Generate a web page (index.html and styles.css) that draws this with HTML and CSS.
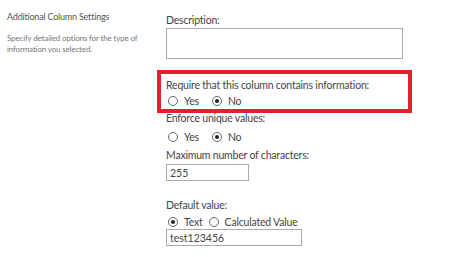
FILE: index.html
```html
<!DOCTYPE html>
<html lang="en">
<head>
    <meta charset="UTF-8">
    <title>Additional Column Settings</title>
    <link rel="stylesheet" href="styles.css">
</head>
<body>
    <div class="settings">
        <div class="section-info">
            <div class="section-title">Additional Column Settings</div>
            <div class="section-desc">Specify detailed options for the type of<br>information you selected.</div>
        </div>
        <div class="fields">
            <div class="field field-desc">
                <label for="description">Description:</label>
                <textarea id="description" class="desc-box"></textarea>
            </div>
            <div class="field field-required">
                <div class="field-label">Require that this column contains information:</div>
                <div class="choices">
                    <label class="choice"><input type="radio" name="required"> Yes</label>
                    <label class="choice"><input type="radio" name="required" checked> No</label>
                </div>
                <!-- highlight box drawn over the field -->
                <div class="highlight"></div>
            </div>
            <div class="field field-unique">
                <div class="field-label">Enforce unique values:</div>
                <div class="choices">
                    <label class="choice"><input type="radio" name="unique"> Yes</label>
                    <label class="choice"><input type="radio" name="unique" checked> No</label>
                </div>
            </div>
            <div class="field field-max">
                <label for="maxChars">Maximum number of characters:</label>
                <input type="text" id="maxChars" class="text-input short" value="255">
            </div>
            <div class="field field-default">
                <div class="field-label">Default value:</div>
                <div class="choices tight">
                    <label class="choice"><input type="radio" name="defType" checked> Text</label>
                    <label class="choice"><input type="radio" name="defType"> Calculated Value</label>
                </div>
                <input type="text" class="text-input medium" value="test123456">
            </div>
        </div>
    </div>
</body>
</html>
```

FILE: styles.css
```css
* {
    margin: 0;
    padding: 0;
    box-sizing: border-box;
}
body {
    font-family: Lato, "Open Sans", sans-serif;
    background: #ffffff;
    color: #444444;
    width: 474px;
    height: 257px;
    overflow: hidden;
}
.settings {
    display: flex;
}
.section-info {
    width: 166px;
    padding: 10px 0 0 7px;
}
.section-title {
    font-size: 9px;
    letter-spacing: -0.2px;
    color: #555;
    line-height: 14px;
}
.section-desc {
    margin-top: 9px;
    font-size: 8px;
    letter-spacing: -0.15px;
    line-height: 11px;
    color: #777;
    white-space: nowrap;
}
.fields {
    display: flex;
    flex-direction: column;
}
.field label,
.field-label {
    display: block;
    font-size: 10.5px;
    letter-spacing: -0.2px;
    line-height: 14px;
    color: #444;
}
.choice {
    display: flex !important;
    align-items: center;
    gap: 6px;
}
.field-desc {
    padding-top: 13px;
}
.desc-box {
    display: block;
    width: 237px;
    height: 31px;
    margin-top: 1px;
    border: 1px solid #ababab;
    resize: none;
    font-family: inherit;
}
.field-required {
    position: relative;
    margin-top: 19px;
}
.choices {
    display: flex;
    gap: 13px;
    padding-left: 2px;
    margin-top: 2px;
}
.choices.tight {
    gap: 6px;
}
.choices input[type="radio"] {
    appearance: none;
    width: 10px;
    height: 10px;
    border: 1px solid #666;
    border-radius: 50%;
    background: #fff;
    display: grid;
    place-content: center;
}
.choices input[type="radio"]:checked::before {
    content: "";
    width: 4px;
    height: 4px;
    border-radius: 50%;
    background: #222;
}
.highlight {
    position: absolute;
    left: -9px;
    top: -8px;
    width: 255px;
    height: 43px;
    border: 4px solid #e3202b;
}
.field-unique {
    margin-top: 3px;
}
.field-unique .choices {
    margin-top: 5px;
}
.field-max {
    margin-top: 4px;
}
.text-input {
    display: block;
    height: 17px;
    margin-top: 2px;
    border: 1px solid #ababab;
    font-family: inherit;
    font-size: 10.5px;
    color: #444;
    padding: 0 3px;
}
.short {
    width: 83px;
}
.medium {
    width: 136px;
    margin-top: 0;
}
.field-default {
    margin-top: 17px;
}
.field-default .choices {
    margin-top: 3px;
}
```
